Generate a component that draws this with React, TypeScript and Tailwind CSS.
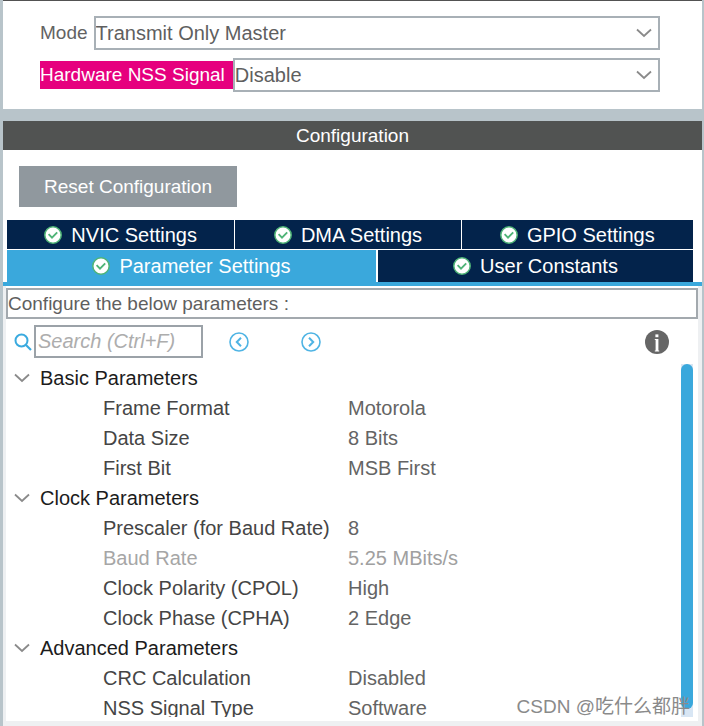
import type { ReactNode } from "react";

type Param = { name: string; value: string; disabled?: boolean };
type Group = { title: string; params: Param[] };

const groups: Group[] = [
  {
    title: "Basic Parameters",
    params: [
      { name: "Frame Format", value: "Motorola" },
      { name: "Data Size", value: "8 Bits" },
      { name: "First Bit", value: "MSB First" },
    ],
  },
  {
    title: "Clock Parameters",
    params: [
      { name: "Prescaler (for Baud Rate)", value: "8" },
      { name: "Baud Rate", value: "5.25 MBits/s", disabled: true },
      { name: "Clock Polarity (CPOL)", value: "High" },
      { name: "Clock Phase (CPHA)", value: "2 Edge" },
    ],
  },
  {
    title: "Advanced Parameters",
    params: [
      { name: "CRC Calculation", value: "Disabled" },
      { name: "NSS Signal Type", value: "Software" },
    ],
  },
];

function Chevron() {
  return (
    <svg width="16" height="10" viewBox="0 0 16 10" fill="none" stroke="#8a8a8a" strokeWidth="1.8">
      <path d="M1 1.5 L8 8 L15 1.5" />
    </svg>
  );
}

function CheckBadge() {
  return (
    <svg className="shrink-0" width="18" height="18" viewBox="0 0 18 18" fill="none">
      <circle cx="9" cy="9" r="8.2" fill="#fff" stroke="#4fb477" strokeWidth="1.5" />
      <path d="M4.6 8.2 L8 11.6 L13.2 6.4" stroke="#4fb477" strokeWidth="1.9" />
    </svg>
  );
}

function CircleArrow({ d }: { d: string }) {
  return (
    <svg width="20" height="20" viewBox="0 0 20 20" fill="none" stroke="#4fb4e4">
      <circle cx="10" cy="10" r="9" strokeWidth="1.6" />
      <path d={d} strokeWidth="2" />
    </svg>
  );
}

function Field({ id, label, value, highlight }: { id: string; label: string; value: string; highlight?: boolean }) {
  return (
    <div className="flex h-[34px] items-center">
      <label
        htmlFor={id}
        className={
          highlight
            ? "h-7 shrink-0 bg-[#e6007e] pr-2 text-[19px] leading-7 text-white"
            : "h-7 shrink-0 pr-[6px] text-[19px] leading-7 text-[#636363]"
        }
      >
        {label}
      </label>
      <div className="relative h-full flex-1">
        <select
          id={id}
          className="h-full w-full appearance-none border-2 border-[#a8b0b6] bg-white pr-8 text-[#5f5f5f] outline-none"
        >
          <option>{value}</option>
        </select>
        <span className="pointer-events-none absolute inset-y-0 right-2 flex items-center">
          <Chevron />
        </span>
      </div>
    </div>
  );
}

function Tab({ active, children }: { active?: boolean; children: ReactNode }) {
  return (
    <button
      role="tab"
      aria-selected={!!active}
      className={
        active
          ? "flex items-center justify-center gap-[9px] bg-[#3aa8dc] leading-7 text-white"
          : "flex items-center justify-center gap-[9px] bg-[#03234b] leading-7 text-white"
      }
    >
      <CheckBadge />
      <span>{children}</span>
    </button>
  );
}

export default function App() {
  return (
    <div className="relative flex h-screen flex-col bg-[#b8c4ca] pr-[2px] pl-[3px] font-['Liberation_Sans',Arial,sans-serif] text-xl leading-[30px]">
      <section className="shrink-0 border-t border-[#525252] bg-white pt-[15px] pr-[42px] pb-[17px] pl-[37px]">
        <div className="flex flex-col gap-2">
          <Field id="mode" label="Mode" value="Transmit Only Master" />
          <Field id="nss" label="Hardware NSS Signal" value="Disable" highlight />
        </div>
      </section>

      <section className="mt-3 flex min-h-0 flex-1 flex-col bg-white">
        <h2 className="h-[29px] shrink-0 bg-[#515352] text-center text-[19px] leading-[29px] text-white">
          Configuration
        </h2>

        <div className="shrink-0 px-4 pt-4 pb-[13px]">
          <button className="h-[41px] w-[218px] bg-[#90989e] text-[19px] text-white">Reset Configuration</button>
        </div>

        <div role="tablist" className="shrink-0 border-b-4 border-[#3aa8dc] pr-[9px] pl-1">
          <div className="grid h-[29px] grid-cols-[227fr_225fr_231fr] gap-px">
            <Tab>NVIC Settings</Tab>
            <Tab>DMA Settings</Tab>
            <Tab>GPIO Settings</Tab>
          </div>
          <div className="mt-px grid h-8 grid-cols-[369fr_315fr] gap-[2px]">
            <Tab active>Parameter Settings</Tab>
            <Tab>User Constants</Tab>
          </div>
        </div>

        <div className="flex min-h-0 flex-1 flex-col border-r-4 border-b-[5px] border-l-[3px] border-[#eef0f2]">
          <p className="mt-[2px] h-[31px] shrink-0 border-2 border-[#a3a9ae] text-[19px] leading-[27px] text-[#5f5f5f]">
            Configure the below parameters :
          </p>

          <div className="mt-[6px] flex h-[33px] shrink-0 items-center pr-[29px] pl-2">
            <label htmlFor="search" className="mr-[2px]" aria-label="Search">
              <svg width="18" height="18" viewBox="0 0 18 18" fill="none" stroke="#3aaadf">
                <circle cx="7.5" cy="7.5" r="6" strokeWidth="2" />
                <path d="M12 12 L17 17" strokeWidth="2.2" />
              </svg>
            </label>
            <input
              id="search"
              placeholder="Search (Ctrl+F)"
              className="h-full w-[169px] border-2 border-[#9ba2a8] px-[2px] italic outline-none placeholder:text-[#adadad]"
            />
            <button aria-label="Previous" className="ml-[26px]">
              <CircleArrow d="M12 5.8 L7.8 10 L12 14.2" />
            </button>
            <button aria-label="Next" className="ml-[52px]">
              <CircleArrow d="M8 5.8 L12.2 10 L8 14.2" />
            </button>
            <button aria-label="Information" className="ml-auto">
              <svg width="24" height="24" viewBox="0 0 24 24">
                <circle cx="12" cy="12" r="12" fill="#666" />
                <rect x="10.4" y="4.4" width="3" height="2.8" fill="#fff" />
                <path d="M9.8 9 H13.4 V20.4 H14.2 V21.4 H9.8 V20.4 H10.6 V10 H9.8 Z" fill="#fff" />
              </svg>
            </button>
          </div>

          <div className="mt-[5px] mb-1 flex min-h-0 flex-1 pr-[5px]">
            <div className="min-h-0 flex-1 overflow-hidden">
              <table className="w-full table-fixed border-collapse text-left">
                <colgroup>
                  <col className="w-[97px]" />
                  <col className="w-[245px]" />
                  <col />
                </colgroup>
                {groups.map((g) => (
                  <tbody key={g.title}>
                    <tr className="h-[30px]">
                      <th colSpan={3} scope="rowgroup" className="p-0 font-normal text-[#1c1c1c]">
                        <button className="flex h-[30px] items-center gap-[10px] pl-2">
                          <Chevron />
                          {g.title}
                        </button>
                      </th>
                    </tr>
                    {g.params.map((p) => (
                      <tr key={p.name} className="h-[30px]">
                        <td className="p-0" />
                        <th
                          scope="row"
                          className={
                            p.disabled
                              ? "p-0 font-normal whitespace-nowrap text-[#a6a6a6]"
                              : "p-0 font-normal whitespace-nowrap text-[#454545]"
                          }
                        >
                          {p.name}
                        </th>
                        <td className={p.disabled ? "p-0 text-[#a0a0a0]" : "p-0 text-[#646464]"}>{p.value}</td>
                      </tr>
                    ))}
                  </tbody>
                ))}
              </table>
            </div>
            <div className="mt-px w-3 bg-[#d8e6f4] pb-2">
              <div className="h-full rounded-md bg-[#3aa8dc]" />
            </div>
          </div>
        </div>
      </section>

      <span className="absolute right-[14px] bottom-1 font-['Liberation_Sans','Noto_Sans_CJK_SC',sans-serif] text-[19px] text-[#8a8a8a]">
        CSDN @吃什么都胖
      </span>
    </div>
  );
}
